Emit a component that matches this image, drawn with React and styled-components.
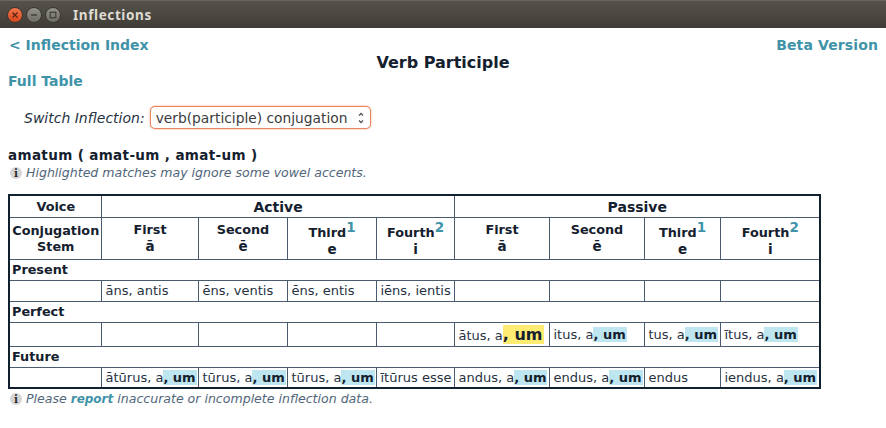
import React from 'react';
import styled, { createGlobalStyle } from 'styled-components';

const GlobalStyle = createGlobalStyle`
  html, body {
    margin: 0;
    padding: 0;
    background: #fff;
    font-family: "DejaVu Sans", sans-serif;
    color: #14202e;
  }
`;

const Window = styled.div`
  width: 886px;
  height: 428px;
  overflow: hidden;
`;

const TitleBar = styled.div`
  height: 28px;
  display: flex;
  align-items: center;
  padding-left: 7px;
  box-sizing: border-box;
  background: linear-gradient(#56524b, #3f3c37);
  border-top: 1px solid #6b675f;
`;

const WinButton = styled.span`
  width: 16px;
  height: 16px;
  border-radius: 50%;
  margin-right: 3px;
  display: flex;
  align-items: center;
  justify-content: center;
  background: ${p => (p.$close ? 'linear-gradient(#f0764a, #d9451c)' : 'linear-gradient(#94918a, #6f6c65)')};
  border: 1px solid #3a3833;
  box-sizing: border-box;
`;

const WinTitle = styled.span`
  margin-left: 9px;
  font-size: 13.5px;
  font-weight: 700;
  font-family: "Noto Sans", "DejaVu Sans", sans-serif;
  letter-spacing: 0.6px;
  color: #dfdbd2;
`;

const Content = styled.div`
  padding: 9px 8px 0 8px;
`;

const Header = styled.div`
  display: grid;
  grid-template-columns: 1fr auto 1fr;
  height: 59px;
`;

const HeadColumn = styled.div`
  display: flex;
  flex-direction: column;
  gap: 19px;
  align-items: ${p => (p.$end ? 'flex-end' : 'flex-start')};
`;

const NavLink = styled.a`
  font-size: 14px;
  line-height: 17px;
  font-weight: 700;
  letter-spacing: ${p => (p.$wide ? '0.12px' : '0')};
  color: #3f93a8;
  padding-left: ${p => (p.$indent ? '1px' : '0')};
`;

const Title = styled.h1`
  margin: 16px 0 0;
  font-size: 16px;
  line-height: 19px;
  font-weight: 700;
  color: #14202e;
`;

const SwitchRow = styled.div`
  display: flex;
  align-items: center;
  padding-left: 16px;
  height: 23px;
  margin-top: 10px;
`;

const SwitchLabel = styled.label`
  font-size: 14px;
  font-style: italic;
  color: #26323f;
  margin-right: 5px;
`;

const SelectBox = styled.div`
  position: relative;
  width: 221px;
  height: 23px;
`;

const Select = styled.select`
  appearance: none;
  width: 100%;
  height: 100%;
  box-sizing: border-box;
  border: 1px solid #e9855c;
  box-shadow: 0 0 2px 0 #ee9a78;
  border-radius: 5px;
  background: #fff;
  padding: 0 0 0 5px;
  font-family: "DejaVu Sans", sans-serif;
  font-size: 13.8px;
  color: #3c3c3c;
  outline: none;
`;

const SelectArrows = styled.svg`
  position: absolute;
  right: 6px;
  top: 5px;
  pointer-events: none;
`;

const Lemma = styled.div`
  margin-top: 18px;
  font-size: 13.5px;
  line-height: 17px;
  font-weight: 700;
  letter-spacing: 0.36px;
`;

const Note = styled.div`
  display: flex;
  align-items: center;
  margin-top: ${p => (p.$spaced ? '1px' : '0')};
  font-size: 12.55px;
  font-style: italic;
  line-height: 17px;
  color: #51667a;
  padding-left: 2px;
`;

const InfoDot = styled.span`
  width: 12px;
  height: 12px;
  border-radius: 50%;
  background: #d6d6d6;
  color: #2c2c2c;
  font-family: "DejaVu Serif", serif;
  font-size: 10.5px;
  font-style: normal;
  font-weight: 700;
  line-height: 12px;
  text-align: center;
  margin-right: 4px;
  flex: none;
`;

const ReportLink = styled.a`
  font-size: 12px;
  font-weight: 700;
  color: #3f93a8;
`;

const Table = styled.table`
  margin-top: 13px;
  width: 813px;
  table-layout: fixed;
  border-collapse: collapse;
  border: 2px solid #10202f;
  font-size: 13px;
`;

const Row = styled.tr`
  height: ${p => p.$h}px;
`;

const Head = styled.th`
  border: 1px solid #4a5b6e;
  padding: 1px 0 0 1px;
  font-size: 12.8px;
  line-height: 16px;
  font-weight: 700;
  text-align: center;
  color: #14202e;
`;

const GroupHead = styled(Head)`
  font-size: 14px;
  padding-top: 2px;
`;

const StemLetter = styled.span`
  font-size: 13.5px;
`;

const SectionCell = styled.th`
  border: 1px solid #4a5b6e;
  padding: 0 0 0 2px;
  text-align: left;
  font-size: 12.8px;
  font-weight: 700;
  color: #14202e;
`;

const Cell = styled.td`
  border: 1px solid #4a5b6e;
  padding: 0 0 0 4px;
  white-space: nowrap;
  overflow: hidden;
  color: #26323f;
`;

const Sup = styled.sup`
  color: #3f93a8;
  font-size: 13.5px;
  line-height: 16px;
  vertical-align: 5px;
`;

const Hit = styled.span`
  background: ${p => (p.$best ? '#fdeb72' : '#bde6f1')};
  font-weight: 700;
  font-size: ${p => (p.$best ? '16px' : '13px')};
  color: #14202e;
  padding-right: 1px;
`;

const widths = [92, 97, 89, 89, 78, 95, 95, 76, 100];

const conj = [
  ['First', 'ā'],
  ['Second', 'ē'],
  ['Third', 'e', 1],
  ['Fourth', 'i', 2],
];

const um = ', um';

const forms = (stem, rows) => rows.map((f, i) => <Cell key={stem + i}>{f}</Cell>);

const hit = (text, best) => (
  <>
    {text}
    <Hit $best={best}>{um}</Hit>
  </>
);

const InfoLine = ({ children, spaced }) => (
  <Note $spaced={spaced}>
    <InfoDot>i</InfoDot>
    <span>{children}</span>
  </Note>
);

export default function App() {
  return (
    <Window>
      <GlobalStyle />
      <TitleBar>
        <WinButton $close>
          <svg width="8" height="8" viewBox="0 0 8 8"><path d="M1.5 1.5l5 5M6.5 1.5l-5 5" stroke="#5a2210" strokeWidth="1.2" /></svg>
        </WinButton>
        <WinButton>
          <svg width="8" height="8" viewBox="0 0 8 8"><path d="M1 4h6" stroke="#3a3833" strokeWidth="1.3" /></svg>
        </WinButton>
        <WinButton>
          <svg width="8" height="8" viewBox="0 0 8 8"><rect x="1.2" y="1.2" width="5.6" height="5.6" fill="none" stroke="#3a3833" strokeWidth="1.1" /></svg>
        </WinButton>
        <WinTitle>Inflections</WinTitle>
      </TitleBar>
      <Content>
        <Header>
          <HeadColumn>
            <NavLink $indent>&lt; Inflection Index</NavLink>
            <NavLink>Full Table</NavLink>
          </HeadColumn>
          <Title>Verb Participle</Title>
          <HeadColumn $end>
            <NavLink $wide>Beta Version</NavLink>
          </HeadColumn>
        </Header>
        <SwitchRow>
          <SwitchLabel>Switch Inflection:</SwitchLabel>
          <SelectBox>
            <Select defaultValue="vpc">
              <option value="vpc">verb(participle) conjugation</option>
            </Select>
            <SelectArrows width="8" height="14" viewBox="0 0 8 14">
              <path d="M2 4.5L4 2.5L6 4.5M2 9.5L4 11.5L6 9.5" fill="none" stroke="#555" strokeWidth="1.3" />
            </SelectArrows>
          </SelectBox>
        </SwitchRow>
        <Lemma>amatum ( amat-um , amat-um )</Lemma>
        <InfoLine>Highlighted matches may ignore some vowel accents.</InfoLine>
        <Table>
          <colgroup>
            {widths.map((w, i) => <col key={i} width={w} />)}
          </colgroup>
          <tbody>
            <Row $h={22}>
              <Head>Voice</Head>
              <GroupHead colSpan={4}>Active</GroupHead>
              <GroupHead colSpan={4}>Passive</GroupHead>
            </Row>
            <Row $h={42}>
              <Head>Conjugation<br />Stem</Head>
              {[...conj, ...conj].map(([name, stem, note], i) => (
                <Head key={i}>
                  {name}{note && <Sup>{note}</Sup>}<br /><StemLetter>{stem}</StemLetter>
                </Head>
              ))}
            </Row>
            <Row $h={21}><SectionCell colSpan={9}>Present</SectionCell></Row>
            <Row $h={21}>
              <Cell />
              {forms('pres', ['āns, antis', 'ēns, ventis', 'ēns, entis', 'iēns, ientis', '', '', '', ''])}
            </Row>
            <Row $h={21}><SectionCell colSpan={9}>Perfect</SectionCell></Row>
            <Row $h={24}>
              <Cell />
              {forms('perf', ['', '', '', '', hit('ātus, a', true), hit('itus, a'), hit('tus, a'), hit('ītus, a')])}
            </Row>
            <Row $h={21}><SectionCell colSpan={9}>Future</SectionCell></Row>
            <Row $h={21}>
              <Cell />
              {forms('fut', [hit('ātūrus, a'), hit('tūrus, a'), hit('tūrus, a'), 'ītūrus esse', hit('andus, a'), hit('endus, a'), 'endus', hit('iendus, a')])}
            </Row>
          </tbody>
        </Table>
        <InfoLine spaced>Please <ReportLink>report</ReportLink> inaccurate or incomplete inflection data.</InfoLine>
      </Content>
    </Window>
  );
}
